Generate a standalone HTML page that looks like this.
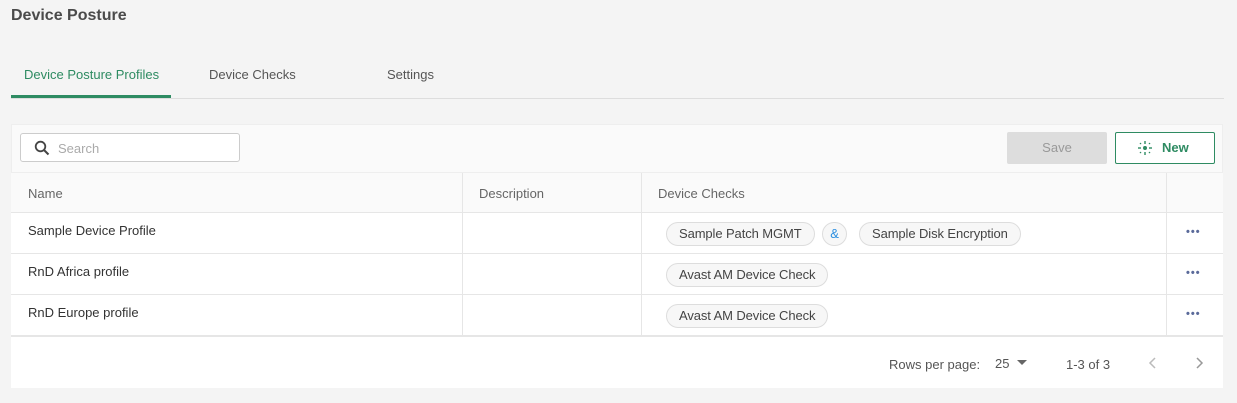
<!DOCTYPE html>
<html><head><style>
*{box-sizing:border-box;margin:0;padding:0}
body{width:1237px;height:403px;background:#f4f4f4;font-family:"Liberation Sans",sans-serif;color:#333;position:relative;overflow:hidden}
.abs{position:absolute}
h1{position:absolute;left:11px;top:7px;font-size:16px;font-weight:bold;color:#4a4a4a}
.tab{position:absolute;top:67px;font-size:13px;color:#555}
.card{position:absolute;left:11px;top:124px;width:1212px;height:264px;background:#fff}
.tb{position:absolute;left:0;top:0;width:1212px;height:49px;background:#fafafa;border:1px solid #eee}
.row{position:absolute;left:0;width:1212px;border-bottom:1px solid #e6e6e6;font-size:13px}
.cell{position:absolute;top:0;height:100%;border-right:1px solid #e6e6e6}
.chip{position:absolute;height:24px;border:1px solid #ddd;border-radius:12px;background:#f7f7f7;font-size:13px;line-height:22px;padding:0 12px;color:#444;letter-spacing:-0.1px}
.dots{position:absolute;left:1175px;font-size:11px;color:#5a6a9a;letter-spacing:1px;font-weight:bold}
</style></head><body>
<h1>Device Posture</h1>
<div class="tab" style="left:24px;color:#2e8b62">Device Posture Profiles</div>
<div class="tab" style="left:209px">Device Checks</div>
<div class="tab" style="left:387px">Settings</div>
<div class="abs" style="left:11px;top:98px;width:1213px;height:1px;background:#ddd"></div>
<div class="abs" style="left:11px;top:95px;width:160px;height:3px;background:#2e8b62"></div>
<div class="card">
 <div class="tb"></div>
 <div class="abs" style="left:9px;top:9px;width:220px;height:29px;border:1px solid #ccc;border-radius:3px;background:#fff">
  <svg class="abs" style="left:13px;top:6px" width="16" height="16" viewBox="0 0 16 16"><circle cx="6.5" cy="6.5" r="4.8" fill="none" stroke="#444" stroke-width="1.8"/><path d="M10 10l4.5 4.5" stroke="#444" stroke-width="2"/></svg>
  <span class="abs" style="left:37px;top:7px;font-size:13px;color:#aaa">Search</span>
 </div>
 <div class="abs" style="left:996px;top:8px;width:100px;height:32px;background:#ddd;border-radius:2px;color:#999;font-size:13px;text-align:center;line-height:32px">Save</div>
 <div class="abs" style="left:1104px;top:8px;width:100px;height:32px;border:1px solid #2e8b62;border-radius:2px;background:#fff;color:#2e8b62;font-size:13px;font-weight:bold;line-height:30px;padding-left:46px">New
  <svg class="abs" style="left:22px;top:8px" width="14" height="14" viewBox="0 0 14 14" fill="#2e8b62"><circle cx="7" cy="7" r="2"/><rect x="6.3" y="0" width="1.4" height="3"/><rect x="6.3" y="11" width="1.4" height="3"/><rect x="0" y="6.3" width="3" height="1.4"/><rect x="11" y="6.3" width="3" height="1.4"/><circle cx="2.5" cy="2.5" r=".8"/><circle cx="11.5" cy="2.5" r=".8"/><circle cx="2.5" cy="11.5" r=".8"/><circle cx="11.5" cy="11.5" r=".8"/></svg></div>
 <div class="row" style="top:49px;height:40px;background:#fafafa;color:#666">
  <div class="cell" style="left:0;width:452px"></div><div class="cell" style="left:452px;width:179px"></div><div class="cell" style="left:631px;width:525px"></div>
  <span class="abs" style="left:17px;top:13px">Name</span><span class="abs" style="left:468px;top:13px">Description</span><span class="abs" style="left:647px;top:13px">Device Checks</span>
 </div>
 <div class="row" style="top:89px;height:41px">
  <div class="cell" style="left:0;width:452px"></div><div class="cell" style="left:452px;width:179px"></div><div class="cell" style="left:631px;width:525px"></div>
  <span class="abs" style="left:17px;top:10px">Sample Device Profile</span>
  <div class="chip" style="left:655px;top:9px">Sample Patch MGMT</div>
  <div class="chip" style="left:811px;top:9px;width:25px;padding:0;text-align:center;color:#2a8ee0">&amp;</div>
  <div class="chip" style="left:848px;top:9px">Sample Disk Encryption</div>
  <span class="dots" style="top:13px">•••</span>
 </div>
 <div class="row" style="top:130px;height:41px">
  <div class="cell" style="left:0;width:452px"></div><div class="cell" style="left:452px;width:179px"></div><div class="cell" style="left:631px;width:525px"></div>
  <span class="abs" style="left:17px;top:10px">RnD Africa profile</span>
  <div class="chip" style="left:655px;top:9px">Avast AM Device Check</div>
  <span class="dots" style="top:13px">•••</span>
 </div>
 <div class="row" style="top:171px;height:42px;border-bottom:2px solid #e6e6e6">
  <div class="cell" style="left:0;width:452px"></div><div class="cell" style="left:452px;width:179px"></div><div class="cell" style="left:631px;width:525px"></div>
  <span class="abs" style="left:17px;top:10px">RnD Europe profile</span>
  <div class="chip" style="left:655px;top:9px">Avast AM Device Check</div>
  <span class="dots" style="top:13px">•••</span>
 </div>
 <span class="abs" style="left:878px;top:233px;font-size:13px;color:#555">Rows per page:</span>
 <span class="abs" style="left:984px;top:232px;font-size:13px;color:#555">25</span>
 <svg class="abs" style="left:1006px;top:236px" width="10" height="6"><path d="M0 0h10L5 5z" fill="#666"/></svg>
 <span class="abs" style="left:1055px;top:233px;font-size:13px;color:#555">1-3 of 3</span>
 <svg class="abs" style="left:1137px;top:232px" width="10" height="14"><path d="M7 2L2 7l5 5" fill="none" stroke="#bbb" stroke-width="1.5"/></svg>
 <svg class="abs" style="left:1183px;top:232px" width="10" height="14"><path d="M3 2l5 5-5 5" fill="none" stroke="#999" stroke-width="1.5"/></svg>
</div>
</body></html>
